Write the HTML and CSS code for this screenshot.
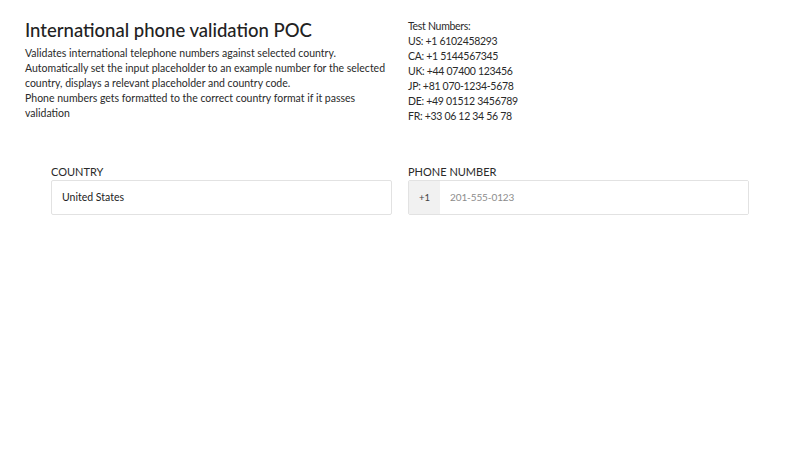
FILE: index.html
```html
<!doctype html>
<html>
<head>
<meta charset="utf-8">
<link rel="stylesheet" href="styles.css">
<title>International phone validation POC</title>
</head>
<body>
<div class="intro">
	<div class="about">
		<h1>International phone validation POC</h1>
		<p>Validates international telephone numbers against selected country.<br>
		Automatically set the input placeholder to an example number for the selected country, displays a relevant placeholder and country code.<br>
		Phone numbers gets formatted to the correct country format if it passes validation</p>
	</div>
	<div class="numbers">
		Test Numbers:<br>
		US: +1 6102458293<br>
		CA: +1 5144567345<br>
		UK: +44 07400 123456<br>
		JP: +81 070-1234-5678<br>
		DE: +49 01512 3456789<br>
		FR: +33 06 12 34 56 78
	</div>
</div>
<div class="form">
	<div class="field">
		<label for="country">COUNTRY</label>
		<div class="box"><span class="value">United States</span></div>
	</div>
	<div class="field">
		<label for="phone">PHONE NUMBER</label>
		<div class="box">
			<span class="code">+1</span>
			<input id="phone" placeholder="201-555-0123">
		</div>
	</div>
</div>
</body>
</html>
```
FILE: styles.css
```css
body {
	margin: 0;
	font-family: Lato, sans-serif;
	font-size: 10.5px;
	line-height: 15px;
	color: #2a2a2a;
	background: #fff;
}

.intro {
	display: grid;
	grid-template-columns: 367px 360px;
	column-gap: 16px;
	padding: 18px 0 0 25px;
}

h1 {
	margin: 0 0 4px;
	font-size: 18.5px;
	line-height: 24px;
	font-weight: 500;
	color: #222;
}

.about p {
	margin: 0;
}

.numbers {
	padding-top: 1px;
	letter-spacing: -0.3px;
}

.form {
	display: grid;
	grid-template-columns: 341px 341px;
	column-gap: 16px;
	padding: 40px 0 0 51px;
}

.field label {
	display: block;
	margin-bottom: 1px;
	font-size: 11px;
}

.box {
	display: flex;
	height: 33px;
	border: 1px solid #e2e2e2;
	border-radius: 2px;
	overflow: hidden;
}

.value {
	align-self: center;
	padding-left: 10px;
	color: #222;
}

.code {
	width: 31px;
	background: #f1f1f1;
	display: flex;
	align-items: center;
	justify-content: center;
	font-size: 9.5px;
	color: #444;
}

.box input {
	flex: 1;
	border: 0;
	padding: 0 10px;
	font: inherit;
	font-size: 10px;
	letter-spacing: -0.1px;
	color: #222;
	outline: none;
}

.box input::placeholder {
	color: #8c8c8c;
}
```
